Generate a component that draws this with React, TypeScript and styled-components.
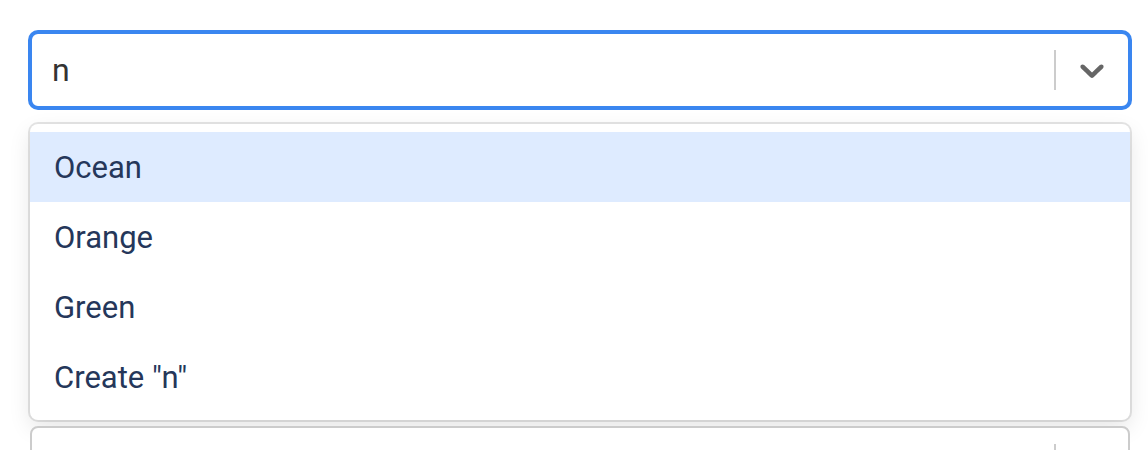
import styled, { createGlobalStyle, css } from 'styled-components'

const GlobalStyle = createGlobalStyle`
  html, body {
    margin: 0;
    padding: 0;
    background: #fff;
  }
  body {
    font-family: Roboto, 'Liberation Sans', sans-serif;
  }
`

const options = ['Ocean', 'Orange', 'Green']

const ChevronDown = () => (
  <svg width="40" height="40" viewBox="0 0 20 20" aria-hidden="true" focusable="false">
    <path d="M4.516 7.548c0.436-0.446 1.043-0.481 1.576 0l3.908 3.747 3.908-3.747c0.533-0.481 1.141-0.446 1.574 0 0.436 0.445 0.408 1.197 0 1.615-0.406 0.418-4.695 4.502-4.695 4.502-0.217 0.223-0.502 0.335-0.787 0.335s-0.57-0.112-0.789-0.335c0 0-4.287-4.084-4.695-4.502s-0.436-1.17 0-1.615z" />
  </svg>
)

const Select = ({ value, focused, open }: { value?: string; focused?: boolean; open?: boolean }) => (
  <Container>
    <Control $focused={focused}>
      <ValueBox>
        <Input>{value}</Input>
      </ValueBox>
      <Indicators>
        <Separator />
        <Dropdown $focused={focused}>
          <ChevronDown />
        </Dropdown>
      </Indicators>
    </Control>
    {open && (
      <Menu>
        {options.map((o, i) => (
          <Option key={o} $active={i === 0}>
            {o}
          </Option>
        ))}
        <Option>Create "{value}"</Option>
      </Menu>
    )}
  </Container>
)

export default function App() {
  return (
    <>
      <GlobalStyle />
      <Page>
        <Select value="n" focused open />
        <Select />
      </Page>
    </>
  )
}

const Page = styled.div`
  box-sizing: border-box;
  width: 1148px;
  height: 450px;
  padding: 32px 18px 0 30px;
  overflow: hidden;
`

const Container = styled.div`
  position: relative;
  font-size: 32px;
`

const Control = styled.div<{ $focused?: boolean }>`
  display: flex;
  align-items: center;
  justify-content: space-between;
  min-height: 76px;
  box-sizing: border-box;
  background: #fff;
  border: 2px solid hsl(0, 0%, 80%);
  border-radius: 8px;
  ${p =>
    p.$focused &&
    css`
      border-color: #3a86f0;
      box-shadow: 0 0 0 2px #3a86f0;
    `}
`

const ValueBox = styled.div`
  flex: 1;
  display: flex;
  align-items: center;
  padding: 4px 16px;
`

const Input = styled.div`
  margin: 4px;
  color: hsl(0, 0%, 20%);
  line-height: 1.2;
  min-height: 38px;
`

const Indicators = styled.div`
  display: flex;
  align-items: stretch;
  align-self: stretch;
`

const Separator = styled.span`
  width: 2px;
  margin: 16px 0;
  background: hsl(0, 0%, 80%);
`

const Dropdown = styled.div<{ $focused?: boolean }>`
  display: flex;
  align-items: center;
  padding: 16px;
  fill: ${p => (p.$focused ? 'hsl(0, 0%, 40%)' : 'hsl(0, 0%, 80%)')};
  svg {
    display: block;
  }
`

const Menu = styled.div`
  margin: 16px 0 6px;
  padding: 8px 0;
  background: #fff;
  border-radius: 8px;
  box-shadow: 0 0 0 2px hsla(0, 0%, 0%, 0.1), 0 8px 22px hsla(0, 0%, 0%, 0.1);
`

const Option = styled.div<{ $active?: boolean }>`
  display: flex;
  align-items: center;
  height: 70px;
  padding: 0 24px;
  box-sizing: border-box;
  color: #25375a;
  font-size: 31px;
  background: ${p => (p.$active ? '#DEEBFF' : 'transparent')};
`
